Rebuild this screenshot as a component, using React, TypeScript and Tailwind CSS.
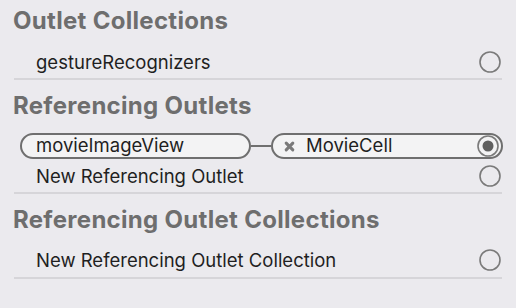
import React from "react";

function Radio({ selected = false }: { selected?: boolean }) {
    return (
        <svg width="24" height="24" viewBox="0 0 24 24" className="shrink-0">
            <circle cx="12" cy="12" r="10" fill="none" stroke="#7a7a7a" strokeWidth="1.6" />
            {selected && <circle cx="12" cy="12" r="5.5" fill="#5f5f5f" />}
        </svg>
    );
}

function Heading({ children }: { children: React.ReactNode }) {
    return (
        <h2 className="h-6 pl-[13px] text-[24px] leading-[26px] font-bold tracking-[0.3px] text-[#6e6e6e]">{children}</h2>
    );
}

function Row({ label }: { label: string }) {
    return (
        <div className="flex h-[26px] items-center justify-between pl-9 pr-[14px]">
            <span className="pt-px">{label}</span>
            <Radio />
        </div>
    );
}

function Separator({ className = "" }: { className?: string }) {
    return <div className={"ml-[14px] mr-[14px] h-[2px] bg-[#d6d5d9] " + className} />;
}

export default function App() {
    return (
        <div
            className="h-[308px] w-[516px] overflow-hidden bg-[#ebeaee] text-[18.5px] text-[#1f1f1f]"
            style={{ fontFamily: "Inter, 'Liberation Sans', sans-serif" }}
        >
            <section className="pt-2">
                <Heading>Outlet Collections</Heading>
                <div className="mt-[17px]">
                    <Row label="gestureRecognizers" />
                </div>
                <Separator className="mt-[3px]" />
            </section>

            <section className="pt-[13px]">
                <Heading>Referencing Outlets</Heading>
                <div className="mt-4 flex h-[26px] items-center pl-5 pr-[13px]">
                    <div className="flex h-[26px] w-[231px] items-center rounded-full border-2 border-[#6f6f6f] bg-[#f3f3f4] pl-[14px]">
                        movieImageView
                    </div>
                    <div className="h-[2px] w-5 bg-[#6f6f6f]" />
                    <div className="flex h-[26px] flex-1 items-center rounded-full border-2 border-[#6f6f6f] bg-[#f3f3f4] pl-[11px] pr-[1px]">
                        <svg width="11" height="11" viewBox="0 0 10 10" className="mr-[11px]">
                            <path d="M2 2 L8 8 M8 2 L2 8" stroke="#7a7a7a" strokeWidth="2.8" strokeLinecap="round" />
                        </svg>
                        <span className="flex-1">MovieCell</span>
                        <Radio selected />
                    </div>
                </div>
                <div className="mt-1">
                    <Row label="New Referencing Outlet" />
                </div>
                <Separator className="mt-[3px]" />
            </section>

            <section className="pt-[13px]">
                <Heading>Referencing Outlet Collections</Heading>
                <div className="mt-4">
                    <Row label="New Referencing Outlet Collection" />
                </div>
                <Separator className="mt-1" />
            </section>
        </div>
    );
}
